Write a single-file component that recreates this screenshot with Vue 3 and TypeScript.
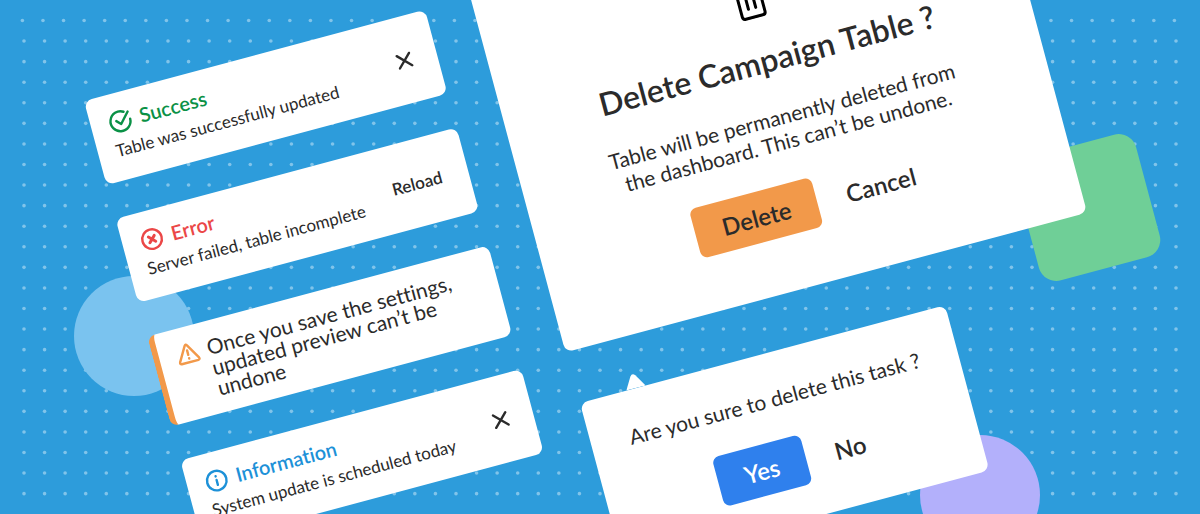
<script setup lang="ts">
interface Notice {
  kind: 'success' | 'error' | 'info'
  title: string
  text: string
  action?: string
}

const results: Notice[] = [
  { kind: 'success', title: 'Success', text: 'Table was successfully updated' },
  { kind: 'error', title: 'Error', text: 'Server failed, table incomplete', action: 'Reload' },
]
const info: Notice = { kind: 'info', title: 'Information', text: 'System update is scheduled today' }

const step = 144 / 7
const dots = Array.from({ length: 24 * 57 }, (_, i) => {
  const row = Math.floor(i / 57)
  return { x: (row === 0 ? 22.4 : 24) + (i % 57) * step, y: 20.5 + row * step }
})
</script>

<template>
  <main class="scene">
    <svg class="dots" aria-hidden="true">
      <circle v-for="(d, i) in dots" :key="i" :cx="d.x" :cy="d.y" r="1.8" />
    </svg>
    <div class="shape circle-blue"></div>
    <div class="shape square-green"></div>
    <div class="shape circle-purple"></div>

    <section class="notices" aria-label="Notifications">
      <article v-for="n in results" :key="n.title" class="card notice" :class="n.kind">
        <div class="copy">
          <h2>
            <svg v-if="n.kind === 'success'" viewBox="0 0 24 24" class="icon">
              <path d="M17.4 3.6A10 10 0 1 0 22 12" />
              <path d="M8 10.8 12 14.8 21.4 4.4" />
            </svg>
            <svg v-else viewBox="0 0 24 24" class="icon">
              <circle cx="12" cy="12" r="9.8" />
              <path class="thick" d="M9 9 15 15M15 9 9 15" />
            </svg>
            {{ n.title }}
          </h2>
          <p>{{ n.text }}</p>
        </div>
        <button v-if="n.action" type="button" class="link">{{ n.action }}</button>
        <button v-else type="button" class="close" aria-label="Close">
          <svg viewBox="0 0 16 16"><path d="M1.6 1.6 14.4 14.4M14.4 1.6 1.6 14.4" /></svg>
        </button>
      </article>

      <article class="card warning">
        <svg viewBox="0 0 24 24" class="icon">
          <path d="M10.8 3.6Q12 1.8 13.2 3.6L21.8 18.4Q22.6 20.4 20.6 20.6H3.4Q1.4 20.4 2.2 18.4Z" />
          <path d="M12 8.6V13.2M12 16.6V17" />
        </svg>
        <p>Once you save the settings, updated preview can’t be undone</p>
      </article>

      <article class="card notice" :class="info.kind">
        <div class="copy">
          <h2>
            <svg viewBox="0 0 24 24" class="icon">
              <circle cx="12" cy="12" r="9.8" />
              <path d="M12 11.4V16.4M12 7.4V7.7" />
            </svg>
            {{ info.title }}
          </h2>
          <p>{{ info.text }}</p>
        </div>
        <button type="button" class="close" aria-label="Close">
          <svg viewBox="0 0 16 16"><path d="M1.6 1.6 14.4 14.4M14.4 1.6 1.6 14.4" /></svg>
        </button>
      </article>
    </section>

    <section class="card dialog" role="dialog" aria-labelledby="dialog-title">
      <svg class="trash" viewBox="0 0 36 40" aria-hidden="true">
        <path d="M2 9H34M12 9V5Q12 2 15 2H21Q24 2 24 5V9M5.5 9V35Q5.5 38 8.5 38H26Q29 38 29 35V9M13.5 17V29M21 17V29" />
      </svg>
      <h1 id="dialog-title">Delete Campaign Table ?</h1>
      <p>Table will be permanently deleted from the dashboard. This can’t be undone.</p>
      <div class="actions">
        <button type="button" class="btn orange">Delete</button>
        <button type="button" class="plain">Cancel</button>
      </div>
    </section>

    <section class="card popover" role="dialog" aria-labelledby="popover-title">
      <svg class="arrow" viewBox="0 0 20 15" aria-hidden="true">
        <path d="M0 15 7.4 2.6Q10 -0.8 12.6 2.6L20 15Z" />
      </svg>
      <p id="popover-title">Are you sure to delete this task ?</p>
      <div class="actions">
        <button type="button" class="btn blue">Yes</button>
        <button type="button" class="plain">No</button>
      </div>
    </section>
  </main>
</template>

<style>
body {
  margin: 0;
}
</style>

<style scoped>
.scene {
  position: relative;
  height: 100vh;
  overflow: hidden;
  background: #2d9cdb;
  color: #2b2b2b;
  font-family: Lato, "Liberation Sans", sans-serif;
  font-variant-ligatures: none;
}

.dots {
  position: absolute;
  inset: 0;
  width: 100%;
  height: 100%;
  fill: #81c4ea;
}

.shape {
  position: absolute;
  width: 120px;
  height: 120px;
  border-radius: 50%;
}

.circle-blue {
  left: 74px;
  top: 276px;
  background: #7ac3ef;
}

.circle-purple {
  left: 920px;
  top: 435px;
  background: #b3b0fb;
}

.square-green {
  left: 1025px;
  top: 144px;
  width: 125px;
  height: 127px;
  border-radius: 18px;
  background: #6fcf97;
  transform: rotate(-15deg);
}

h1,
h2,
p {
  margin: 0;
}

button {
  padding: 0;
  border: 0;
  background: none;
  color: inherit;
  font: inherit;
  font-weight: 600;
  cursor: pointer;
}

.card {
  box-sizing: border-box;
  border-radius: 8px;
  background: #fff;
}

.notices,
.dialog,
.popover {
  position: absolute;
  transform: rotate(-15deg);
  transform-origin: 0 0;
}

.notices {
  left: 84px;
  top: 101px;
  display: flex;
  flex-direction: column;
  gap: 35px;
  width: 353px;
}

.notice {
  display: flex;
  align-items: center;
  justify-content: space-between;
  padding: 15px 25px 15px 18px;
}

.notice h2 {
  display: flex;
  align-items: center;
  gap: 8px;
  font-size: 20px;
  line-height: 27px;
  font-weight: 600;
}

.notice p {
  font-size: 17px;
  line-height: 30px;
}

.icon {
  flex: none;
  width: 24px;
  height: 24px;
  fill: none;
  stroke: currentColor;
  stroke-width: 2.4;
  stroke-linecap: round;
  stroke-linejoin: round;
}

.thick {
  stroke-width: 3;
}

.success h2 {
  color: #0a9146;
}

.error h2 {
  color: #eb4747;
}

.info h2 {
  color: #1d91d8;
}

.close svg {
  display: block;
  width: 16px;
  height: 16px;
  stroke: #2b2b2b;
  stroke-width: 2.4;
  stroke-linecap: round;
}

.link {
  margin-right: 2px;
  font-size: 17px;
}

.warning {
  display: flex;
  gap: 8px;
  padding: 15px 40px 15px 17px;
  border-left: 6px solid #f2994a;
}

.warning .icon {
  color: #f2994a;
}

.warning p {
  font-size: 21px;
  line-height: 21px;
}

.dialog {
  left: 462px;
  top: -34px;
  display: flex;
  flex-direction: column;
  align-items: center;
  width: 540px;
  padding: 87px 90px 55px;
  text-align: center;
}

.trash {
  width: 36px;
  height: 40px;
  fill: none;
  stroke: #000;
  stroke-width: 3;
  stroke-linecap: round;
}

h1 {
  margin-top: 24px;
  font-size: 32px;
  line-height: 38px;
  font-weight: 600;
}

.dialog p {
  margin-top: 26px;
  font-size: 21px;
  line-height: 25px;
}

.actions {
  display: flex;
  justify-content: center;
  gap: 30px;
  margin-top: 29px;
  font-size: 24px;
}

.btn {
  height: 51px;
  border-radius: 7px;
}

.orange {
  width: 126px;
  background: #f2994a;
}

.blue {
  width: 91px;
  background: #2f80ed;
  color: #fff;
}

.popover {
  left: 580px;
  top: 403px;
  width: 378px;
  padding: 33px 30px;
  text-align: center;
}

.popover p {
  font-size: 21px;
  line-height: 25px;
}

.arrow {
  position: absolute;
  left: 48px;
  bottom: 100%;
  width: 20px;
  height: 15px;
  fill: #fff;
}
</style>
